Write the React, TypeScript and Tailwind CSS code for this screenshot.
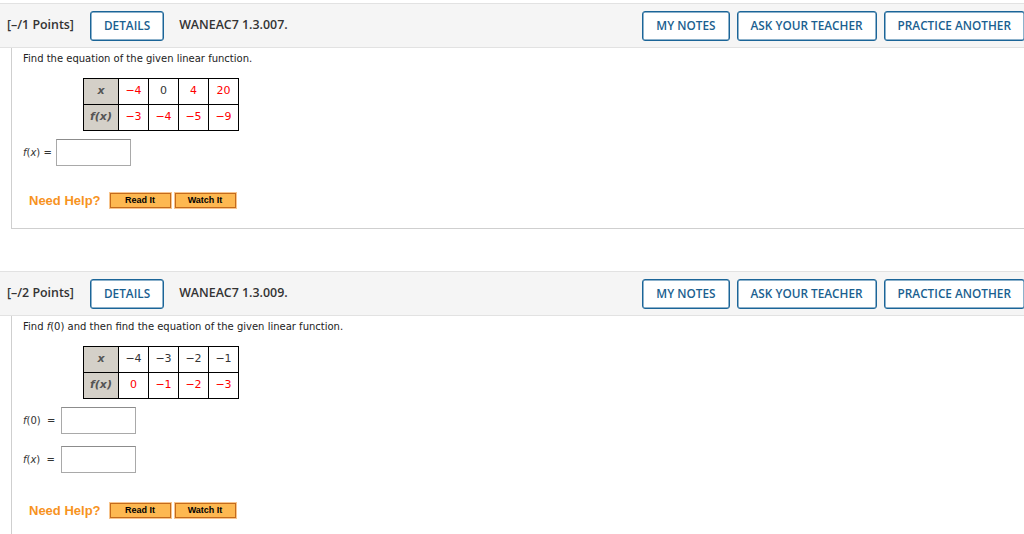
import React from 'react';

type Cell = { v: string; red?: boolean };

interface QuestionProps {
  points: string;
  code: string;
  prompt: React.ReactNode;
  xs: Cell[];
  fs: Cell[];
  answers: { label: React.ReactNode; inputLeft: string }[];
  helpGap: string;
  last?: boolean;
}

function HeaderButton({ children }: { children: React.ReactNode }) {
  return (
    <button className="h-[30px] px-[13px] rounded-[3px] border border-[#1b6598] bg-white text-[11.8px] font-semibold text-[#1b5f90] shadow-[inset_0_0_0_0.5px_#1b6598]">
      {children}
    </button>
  );
}

function ValueTable({ xs, fs }: { xs: Cell[]; fs: Cell[] }) {
  const cell = 'w-[30px] h-[26px] border border-black text-center';
  const head = 'w-[35px] h-[26px] border border-black bg-[#d4d0c8] text-center font-bold italic text-[#555]';
  return (
    <table className="ml-[60px] border-collapse text-[11px] font-['DejaVu_Sans',Verdana,sans-serif]">
      <tbody>
        <tr>
          <td className={head}>x</td>
          {xs.map((c, i) => (
            <td key={i} className={`${cell} ${c.red ? 'text-[#f00]' : 'text-[#333]'}`}>{c.v}</td>
          ))}
        </tr>
        <tr>
          <td className={head}>f(x)</td>
          {fs.map((c, i) => (
            <td key={i} className={`${cell} ${c.red ? 'text-[#f00]' : 'text-[#333]'}`}>{c.v}</td>
          ))}
        </tr>
      </tbody>
    </table>
  );
}

function HelpRow() {
  const btn =
    'w-[61px] h-[15px] bg-[#fdb851] border border-[#c46a1c] shadow-[0_0_0_1px_#f7c58e] text-[9px] font-bold text-black leading-none';
  return (
    <div className="h-[16px] flex items-center ml-[6px] font-['Liberation_Sans',Arial,sans-serif] leading-none">
      <span className="text-[13px] font-bold text-[#f7931e] mr-[9px]">Need Help?</span>
      <button className={btn}>Read It</button>
      <button className={`${btn} ml-[4px]`}>Watch It</button>
    </div>
  );
}

function Question({ points, code, prompt, xs, fs, answers, helpGap, last }: QuestionProps) {
  return (
    <section>
      <div className="h-[45px] flex items-center pl-[7px] border-t border-b border-[#e2e2e2] bg-[#f5f5f5] font-['Open_Sans',sans-serif] text-[#333]">
        <span className="text-[12.4px] font-semibold">{points}</span>
        <div className="ml-[16px]">
          <HeaderButton>DETAILS</HeaderButton>
        </div>
        <span className="ml-[15px] text-[12.4px] font-semibold">{code}</span>
        <div className="ml-auto -mr-[1px] flex gap-[7px]">
          <HeaderButton>MY NOTES</HeaderButton>
          <HeaderButton>ASK YOUR TEACHER</HeaderButton>
          <HeaderButton>PRACTICE ANOTHER</HeaderButton>
        </div>
      </div>
      <div
        className={`ml-[11px] border-l border-[#cfcfcf] pl-[11px] pt-[4px] font-['DejaVu_Sans',Verdana,sans-serif] text-[#222] ${
          last ? 'pb-[20px]' : 'border-b pb-[20px]'
        }`}
      >
        <p className="text-[10px] leading-[14px]">{prompt}</p>
        <div className="mt-[12px]">
          <ValueTable xs={xs} fs={fs} />
        </div>
        <div className="mt-[8px] flex flex-col gap-[12px]">
          {answers.map((a, i) => (
            <div key={i} className="flex items-center h-[27px]">
              <span className="text-[10px] text-[#333] whitespace-pre" style={{ width: a.inputLeft }}>{a.label}</span>
              <div className="w-[75px] h-[27px] border border-[#a9a9a9] border-t-[#8c8c8c] bg-white" />
            </div>
          ))}
        </div>
        <div style={{ marginTop: helpGap }}>
          <HelpRow />
        </div>
      </div>
    </section>
  );
}

export default function App() {
  return (
    <div className="w-[1024px] h-[534px] overflow-hidden bg-white pt-[3px]">
      <Question
        points="[–/1 Points]"
        code="WANEAC7 1.3.007."
        prompt="Find the equation of the given linear function."
        xs={[{ v: '−4', red: true }, { v: '0' }, { v: '4', red: true }, { v: '20', red: true }]}
        fs={[{ v: '−3', red: true }, { v: '−4', red: true }, { v: '−5', red: true }, { v: '−9', red: true }]}
        answers={[{ label: <><i>f</i>(<i>x</i>) =</>, inputLeft: '33px' }]}
        helpGap="26px"
      />
      <div className="h-[42px]" />
      <Question
        points="[–/2 Points]"
        code="WANEAC7 1.3.009."
        prompt={<>Find <i>f</i>(0) and then find the equation of the given linear function.</>}
        xs={[{ v: '−4' }, { v: '−3' }, { v: '−2' }, { v: '−1' }]}
        fs={[{ v: '0', red: true }, { v: '−1', red: true }, { v: '−2', red: true }, { v: '−3', red: true }]}
        answers={[
          { label: <><i>f</i>(0)  =</>, inputLeft: '38px' },
          { label: <><i>f</i>(<i>x</i>)  =</>, inputLeft: '38px' },
        ]}
        helpGap="29px"
        last
      />
    </div>
  );
}
